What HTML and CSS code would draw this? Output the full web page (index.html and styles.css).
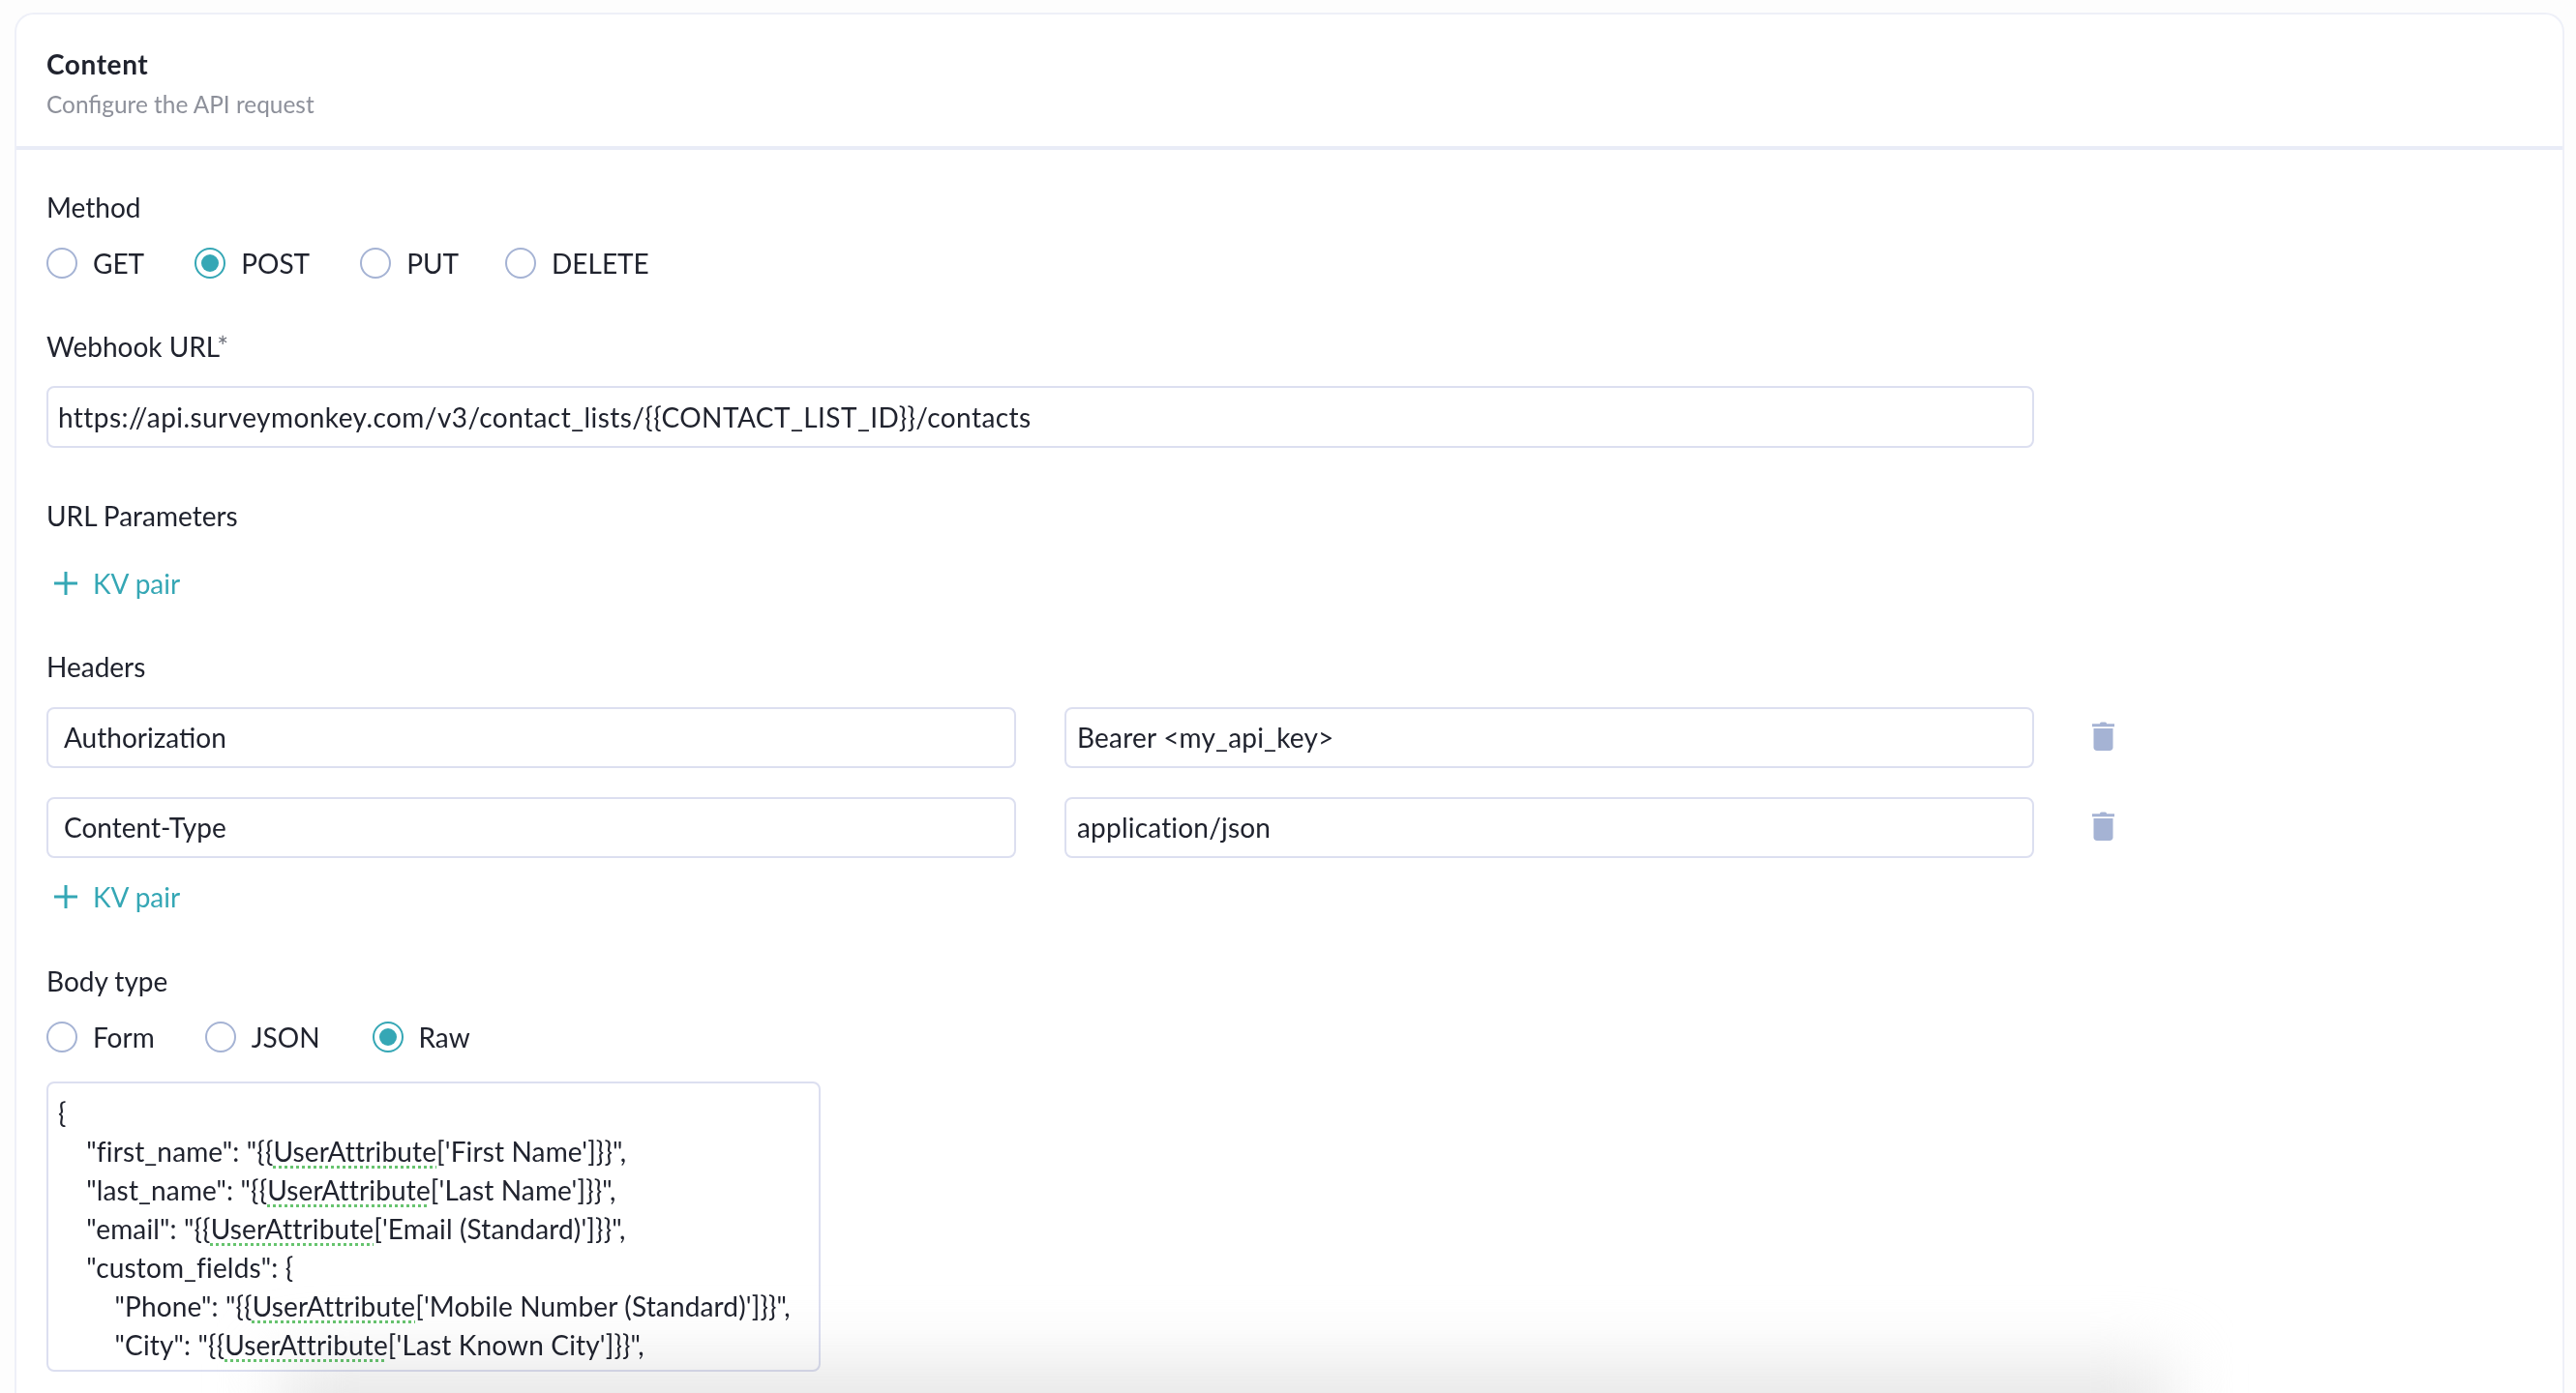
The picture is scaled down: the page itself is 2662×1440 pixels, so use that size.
FILE: index.html
```html
<!DOCTYPE html>
<html lang="en">
<head>
<meta charset="utf-8">
<title>Content</title>
<link rel="stylesheet" href="styles.css">
</head>
<body>
<section class="card">
  <header class="card-header">
    <h2 class="card-title">Content</h2>
    <p class="card-sub">Configure the API request</p>
  </header>
  <div class="card-body">
    <div class="label">Method</div>
    <div class="radios radios-method">
      <label class="radio"><span class="dot"></span>GET</label>
      <label class="radio"><span class="dot on"></span>POST</label>
      <label class="radio"><span class="dot"></span>PUT</label>
      <label class="radio"><span class="dot"></span>DELETE</label>
    </div>
    <div class="label label-webhook">Webhook URL<span class="req">*</span></div>
    <div class="input input-url">https://api.surveymonkey.com/v3/contact_lists/{{CONTACT_LIST_ID}}/contacts</div>
    <div class="label label-params">URL Parameters</div>
    <div class="add add-params"><svg class="plus" viewBox="0 0 24 24"><path d="M12 0v24M0 12h24"/></svg>KV pair</div>
    <div class="label label-headers">Headers</div>
    <div class="kv-row">
      <div class="input key">Authorization</div>
      <div class="input val">Bearer &lt;my_api_key&gt;</div>
      <svg class="trash" viewBox="0 0 23 30"><path d="M8 2.2C8 .9 9 .6 11.500 .6S15 .9 15 2.200H23V5.200H0V2.200Z"/><path d="M1.500 7H21.500V26.500C21.500 28.500 20 30 18 30H5C3 30 1.500 28.500 1.500 26.500Z"/></svg>
    </div>
    <div class="kv-row">
      <div class="input key">Content-Type</div>
      <div class="input val">application/json</div>
      <svg class="trash" viewBox="0 0 23 30"><path d="M8 2.2C8 .9 9 .6 11.500 .6S15 .9 15 2.200H23V5.200H0V2.200Z"/><path d="M1.500 7H21.500V26.500C21.500 28.500 20 30 18 30H5C3 30 1.500 28.500 1.500 26.500Z"/></svg>
    </div>
    <div class="add add-headers"><svg class="plus" viewBox="0 0 24 24"><path d="M12 0v24M0 12h24"/></svg>KV pair</div>
    <div class="label label-body">Body type</div>
    <div class="radios radios-body">
      <label class="radio"><span class="dot"></span>Form</label>
      <label class="radio"><span class="dot"></span>JSON</label>
      <label class="radio"><span class="dot on"></span>Raw</label>
    </div>
    <div class="code">{
    "first_name": "{{<span class="sp">UserAttribute</span>['First Name']}}",
    "last_name": "{{<span class="sp">UserAttribute</span>['Last Name']}}",
    "email": "{{<span class="sp">UserAttribute</span>['Email (Standard)']}}",
    "custom_fields": {
        "Phone": "{{<span class="sp">UserAttribute</span>['Mobile Number (Standard)']}}",
        "City": "{{<span class="sp">UserAttribute</span>['Last Known City']}}",</div>
  </div>
</section>
<div class="bottom-shade"></div>
</body>
</html>
```

FILE: styles.css
```css
* { box-sizing: border-box; }
html, body { margin: 0; height: 1440px; overflow: hidden; }
body {
  background: #fdfdfd;
  color: #20232e;
  font-family: "Lato", "Liberation Sans", sans-serif;
  font-size: 28px;
  padding: 13px 12px 0 15px;
}
.card {
  background: #fff;
  border: 2px solid #eef0f8;
  border-bottom: 0;
  border-radius: 20px 20px 0 0;
  height: 1427px;
  overflow: hidden;
}
.card-header {
  height: 140px;
  border-bottom: 4px solid #e9ecf7;
  padding: 33px 31px 0;
}
.card-title { margin: 0; font-size: 28px; line-height: 36px; font-weight: 700; letter-spacing: .6px; }
.card-sub { margin: 6px 0 0; font-size: 24.4px; line-height: 36px; color: #8d909a; }
.card-body { padding: 39px 31px 0; }
.label { line-height: 40px; height: 40px; }
.req { color: #6f727c; }
.radios { display: flex; height: 40px; margin-top: 18px; }
.radio { display: flex; align-items: center; line-height: 40px; margin-right: 52px; }
.dot {
  width: 32px; height: 32px; margin-right: 16px;
  border: 2px solid #a5b3d4; border-radius: 50%;
  display: flex; align-items: center; justify-content: center;
}
.dot.on { border-color: #35a7b5; }
.dot.on::after { content: ""; width: 18px; height: 18px; border-radius: 50%; background: #35a7b5; }
.radios-method .radio:nth-child(3) { margin-right: 48px; }
.radios-body .radio:nth-child(2) { margin-right: 54px; }
.input {
  height: 64px; line-height: 60px;
  border: 2px solid #dcdff0; border-radius: 8px;
  padding-left: 10px; background: #fff;
}
.label-webhook { margin-top: 46px; }
.input-url { width: 2054px; margin-top: 21px; letter-spacing: .44px; }
.label-params { margin-top: 50px; }
.add { display: flex; align-items: center; height: 40px; color: #35a7b5; }
.add-params { margin-top: 30px; }
.add-headers { margin-top: 20px; }
.plus { width: 24px; height: 24px; margin: 0 16px 0 8px; fill: none; stroke: #35a7b5; stroke-width: 3; }
.label-headers { margin-top: 46px; margin-bottom: 22px; }
.kv-row { display: flex; align-items: center; margin-bottom: 30px; }
.kv-row + .kv-row { margin-bottom: 0; }
.kv-row .input { height: 63px; line-height: 59px; }
.key { width: 1002px; padding-left: 16px; }
.val { width: 1002px; margin-left: 50px; padding-left: 11px; letter-spacing: .2px; }
.trash { width: 23px; height: 30px; margin: -3px 0 0 60px; fill: #a5b3d4; }
.label-body { margin-top: 47px; }
.radios-body { margin-top: 18px; }
.code {
  width: 800px; height: 300px; margin-top: 26px; padding: 10px 10px 0;
  border: 2px solid #dcdff0; border-radius: 8px;
  line-height: 40px; white-space: pre; overflow: hidden; letter-spacing: .15px;
}
.sp { text-decoration: underline dotted #67c46f 3px; text-underline-offset: 4px; }
.bottom-shade {
  position: absolute; left: 290px; right: 420px; bottom: -60px; height: 90px;
  background: #e6e6e6; filter: blur(34px); pointer-events: none; mix-blend-mode: multiply;
}
```
